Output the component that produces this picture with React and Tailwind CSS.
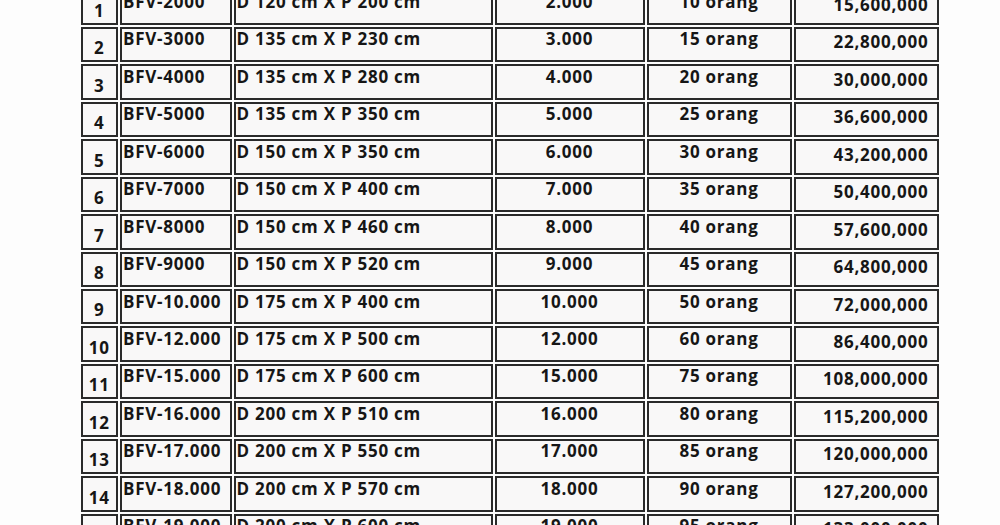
import React from "react";

const rows = [
  ["1", "BFV-2000", "D 120 cm X P 200 cm", "2.000", "10 orang", "15,600,000"],
  ["2", "BFV-3000", "D 135 cm X P 230 cm", "3.000", "15 orang", "22,800,000"],
  ["3", "BFV-4000", "D 135 cm X P 280 cm", "4.000", "20 orang", "30,000,000"],
  ["4", "BFV-5000", "D 135 cm X P 350 cm", "5.000", "25 orang", "36,600,000"],
  ["5", "BFV-6000", "D 150 cm X P 350 cm", "6.000", "30 orang", "43,200,000"],
  ["6", "BFV-7000", "D 150 cm X P 400 cm", "7.000", "35 orang", "50,400,000"],
  ["7", "BFV-8000", "D 150 cm X P 460 cm", "8.000", "40 orang", "57,600,000"],
  ["8", "BFV-9000", "D 150 cm X P 520 cm", "9.000", "45 orang", "64,800,000"],
  ["9", "BFV-10.000", "D 175 cm X P 400 cm", "10.000", "50 orang", "72,000,000"],
  ["10", "BFV-12.000", "D 175 cm X P 500 cm", "12.000", "60 orang", "86,400,000"],
  ["11", "BFV-15.000", "D 175 cm X P 600 cm", "15.000", "75 orang", "108,000,000"],
  ["12", "BFV-16.000", "D 200 cm X P 510 cm", "16.000", "80 orang", "115,200,000"],
  ["13", "BFV-17.000", "D 200 cm X P 550 cm", "17.000", "85 orang", "120,000,000"],
  ["14", "BFV-18.000", "D 200 cm X P 570 cm", "18.000", "90 orang", "127,200,000"],
  ["15", "BFV-19.000", "D 200 cm X P 600 cm", "19.000", "95 orang", "133,000,000"],
];

const cell = "border-2 border-[#2a2a2a] bg-[#f9f8f8] flex h-[35.45px] overflow-hidden whitespace-nowrap";

export default function App() {
  return (
    <div
      className="w-[1000px] h-[525px] overflow-hidden bg-[#fdfdfd] text-[#161616] font-bold text-[17px] leading-[20px] tracking-[0.75px]"
      style={{ fontFamily: '"Open Sans", "Noto Sans", sans-serif' }}
    >
      {/* price table, first row is cut at the top */}
      <div className="ml-[81px] mt-[-10.5px] grid grid-cols-[36.5px_112px_259px_150px_145px_145px] gap-x-[2px] gap-y-[2px] w-max">
        {rows.map((r) => (
          <React.Fragment key={r[0]}>
            <div className={`${cell} items-end justify-center pb-[2px]`}>{r[0]}</div>
            <div className={`${cell} items-start pl-[1.5px] pt-[0.5px]`}>{r[1]}</div>
            <div className={`${cell} items-start pl-[1px] pt-[0.5px]`}>{r[2]}</div>
            <div className={`${cell} items-start justify-center pt-[0.5px]`}>{r[3]}</div>
            <div className={`${cell} items-start justify-center pt-[0.5px]`}>{r[4]}</div>
            <div className={`${cell} items-start justify-end pr-[8px] pt-[3.5px]`}>{r[5]}</div>
          </React.Fragment>
        ))}
      </div>
    </div>
  );
}
